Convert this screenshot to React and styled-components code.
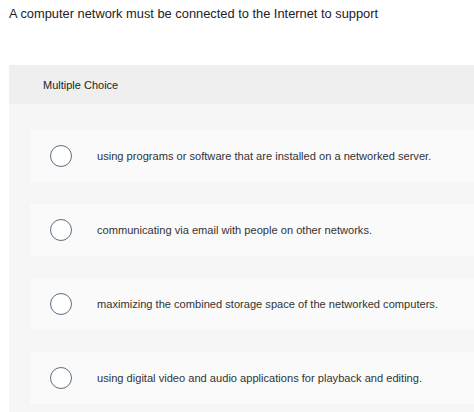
import React from 'react';
import styled, { createGlobalStyle } from 'styled-components';

const GlobalStyle = createGlobalStyle`
  html, body {
    margin: 0;
    padding: 0;
    background: #fff;
  }
  body {
    font-family: "Liberation Sans", Arial, sans-serif;
    color: #222;
  }
`;

const Page = styled.div`
  padding: 6px 0 0 9px;
`;

const Question = styled.p`
  margin: 0;
  font-size: 12.85px;
  line-height: 16px;
  color: #222;
`;

const Panel = styled.section`
  margin-top: 43px;
  background: #f6f6f6;
  padding-bottom: 8px;
`;

const PanelHeader = styled.div`
  display: flex;
  align-items: center;
  height: 39px;
  padding-left: 34px;
  background: #efefef;
  font-size: 11px;
  color: #222;
`;

const Options = styled.ul`
  list-style: none;
  margin: 0;
  padding: 26px 0 0 21px;
  display: flex;
  flex-direction: column;
  gap: 22px;
`;

const Option = styled.li`
  display: flex;
  align-items: center;
  gap: 25px;
  height: 52px;
  padding-left: 20px;
  background: #fafafa;
`;

const Radio = styled.span`
  flex: none;
  width: 22px;
  height: 22px;
  box-sizing: border-box;
  border: 1.5px solid #5b6f82;
  border-radius: 50%;
  background: #fff;
`;

const OptionText = styled.span`
  font-size: 11.1px;
  color: #333;
`;

const choices = [
  'using programs or software that are installed on a networked server.',
  'communicating via email with people on other networks.',
  'maximizing the combined storage space of the networked computers.',
  'using digital video and audio applications for playback and editing.',
];

const App = () => (
  <>
    <GlobalStyle />
    <Page>
      <Question>A computer network must be connected to the Internet to support</Question>
      <Panel>
        <PanelHeader>Multiple Choice</PanelHeader>
        <Options>
          {choices.map(choice => (
            <Option key={choice}>
              <Radio />
              <OptionText>{choice}</OptionText>
            </Option>
          ))}
        </Options>
      </Panel>
    </Page>
  </>
);

export default App;
